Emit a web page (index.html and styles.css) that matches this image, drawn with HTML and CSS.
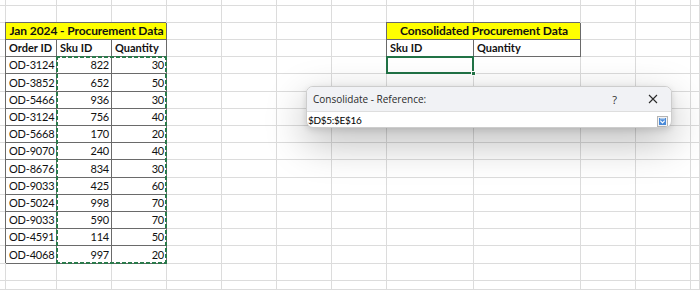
FILE: index.html
```html
<!DOCTYPE html>
<html lang="en">
<head>
    <meta charset="UTF-8">
    <meta name="viewport" content="width=device-width, initial-scale=1.0">
    <title>Consolidate - Reference</title>
    <link rel="stylesheet" href="styles.css">
</head>
<body>
    <!-- Grade da planilha (gerada pelo script) -->
    <div class="sheet" id="sheet"></div>

    <!-- Janela Consolidate -->
    <div class="dialog">
        <div class="dialog-title">
            <span class="dialog-caption">Consolidate - Reference:</span>
            <span class="dialog-help">?</span>
            <svg class="dialog-close" width="10" height="10" viewBox="0 0 10 10">
                <path d="M1 1L9 9M9 1L1 9" stroke="#2b2b2b" stroke-width="1.1" fill="none"/>
            </svg>
        </div>
        <div class="dialog-body">
            <span class="dialog-ref">$D$5:$E$16</span>
            <svg class="collapse-btn" width="11" height="11" viewBox="0 0 11 11">
                <rect x="0.5" y="0.5" width="10" height="10" fill="#f4f4f4" stroke="#b4b4b4"/>
                <rect x="2" y="2" width="7" height="7" fill="#4a8ad8"/>
                <path d="M3.3 4.6L5.5 6.8L7.7 4.6" stroke="#fff" stroke-width="1.2" fill="none"/>
                <path d="M3 2.8H8" stroke="#fff" stroke-width="0.8"/>
            </svg>
        </div>
    </div>

    <script>
        document.addEventListener('DOMContentLoaded', () => {
            const sheet = document.getElementById('sheet');
            const totalRows = 18;
            const totalCols = 13;
            const cells = {};
            const covered = {};

            function put(r, c, text, cls, span) {
                cells[r + ',' + c] = { text: text, cls: cls, span: span || 1 };
                for (let i = 1; i < (span || 1); i++) {
                    covered[r + ',' + (c + i)] = true;
                }
            }

            const dados = [
                ['OD-3124', 822, 30],
                ['OD-3852', 652, 50],
                ['OD-5466', 936, 30],
                ['OD-3124', 756, 40],
                ['OD-5668', 170, 20],
                ['OD-9070', 240, 40],
                ['OD-8676', 834, 30],
                ['OD-9033', 425, 60],
                ['OD-5024', 998, 70],
                ['OD-9033', 590, 70],
                ['OD-4591', 114, 50],
                ['OD-4068', 997, 20]
            ];

            // Tabela de origem
            put(2, 1, 'Jan 2024 - Procurement Data', 'tb title', 3);
            put(3, 1, 'Order ID', 'tb head');
            put(3, 2, 'Sku ID', 'tb head');
            put(3, 3, 'Quantity', 'tb head');
            dados.forEach((linha, i) => {
                put(4 + i, 1, linha[0], 'tb');
                put(4 + i, 2, linha[1], 'tb num');
                put(4 + i, 3, linha[2], 'tb num');
            });

            // Tabela consolidada
            put(2, 8, 'Consolidated Procurement Data', 'tb title', 2);
            put(3, 8, 'Sku ID', 'tb head');
            put(3, 9, 'Quantity', 'tb head');

            for (let r = 0; r < totalRows; r++) {
                for (let c = 0; c < totalCols; c++) {
                    const key = r + ',' + c;
                    if (covered[key]) continue;
                    const info = cells[key];
                    const cell = document.createElement('div');
                    cell.className = 'cell' + (info ? ' ' + info.cls : '');
                    cell.style.gridRow = r + 1;
                    cell.style.gridColumn = (c + 1) + ' / span ' + (info ? info.span : 1);
                    if (info) cell.textContent = info.text;
                    sheet.appendChild(cell);
                }
            }

            // Borda tracejada da cópia (B4:C15)
            const marquee = document.createElement('div');
            marquee.className = 'marquee';
            marquee.style.gridRow = '5 / 17';
            marquee.style.gridColumn = '3 / 5';
            sheet.appendChild(marquee);

            // Célula selecionada (H4)
            const selected = document.createElement('div');
            selected.className = 'selected';
            selected.style.gridRow = '5';
            selected.style.gridColumn = '9';
            selected.innerHTML = '<span class="fill-handle"></span>';
            sheet.appendChild(selected);
        });
    </script>
</body>
</html>
```

FILE: styles.css
```css
* {
    margin: 0;
    padding: 0;
    box-sizing: border-box;
}

body {
    position: relative;
    width: 700px;
    height: 290px;
    overflow: hidden;
    background-color: #fff;
    font-family: Lato, "Liberation Sans", sans-serif;
    color: #111;
}

.sheet {
    display: grid;
    grid-template-columns: 6px 51px 55px 55px 55px 55px 55px 55px 87px 107px 55px 55px 1fr;
    grid-template-rows: 6px repeat(3, 17px 17px 17px 17px 18px) 17px 1fr;
    width: 700px;
    height: 290px;
}

.cell {
    display: flex;
    align-items: flex-end;
    padding: 0 2px 2px 3px;
    font-size: 11px;
    letter-spacing: -0.2px;
    line-height: 13px;
    white-space: nowrap;
    border-right: 1px solid #dcdcdc;
    border-bottom: 1px solid #dcdcdc;
}

/* Células com borda da tabela */
.tb {
    border-color: #6a6a6a;
    box-shadow: -1px -1px 0 #6a6a6a;
}

.title {
    justify-content: center;
    background-color: #ffff00;
    font-size: 12px;
    letter-spacing: -0.1px;
    font-weight: bold;
}

.head {
    font-weight: bold;
    letter-spacing: 0;
}

.num {
    justify-content: flex-end;
}

.marquee {
    margin: -1px 0 0 -1px;
    z-index: 1;
    background:
        repeating-linear-gradient(90deg, #2a7a4b 0 4px, transparent 4px 6px) top left / 100% 2px no-repeat,
        repeating-linear-gradient(90deg, #2a7a4b 0 4px, transparent 4px 6px) bottom left / 100% 2px no-repeat,
        repeating-linear-gradient(180deg, #2a7a4b 0 4px, transparent 4px 6px) top left / 2px 100% no-repeat,
        repeating-linear-gradient(180deg, #2a7a4b 0 4px, transparent 4px 6px) top right / 2px 100% no-repeat;
}

.selected {
    position: relative;
    margin: -1px 0 0 -1px;
    z-index: 1;
    border: 2px solid #217346;
}

.fill-handle {
    position: absolute;
    right: -4px;
    bottom: -4px;
    width: 5px;
    height: 5px;
    background-color: #217346;
    border: 1px solid #fff;
}

/* Janela Consolidate */
.dialog {
    position: absolute;
    left: 306px;
    top: 86px;
    width: 366px;
    border: 1px solid #cdcdcd;
    border-radius: 7px;
    overflow: hidden;
    background-color: #fff;
    box-shadow: 0 14px 40px rgba(0, 0, 0, 0.28), 0 2px 6px rgba(0, 0, 0, 0.12);
    z-index: 5;
}

.dialog-title {
    display: flex;
    align-items: center;
    height: 25px;
    padding: 0 13px 0 6px;
    background-color: #f1f2f5;
    border-bottom: 1px solid #dedede;
    font-family: "Open Sans", "Noto Sans", sans-serif;
    font-size: 10px;
    color: #2b2b2b;
}

.dialog-caption {
    flex: 1;
}

.dialog-help {
    margin-right: 31px;
    font-size: 11px;
}

.dialog-body {
    display: flex;
    align-items: center;
    justify-content: space-between;
    height: 15px;
    padding: 0 3px 0 1px;
}

.dialog-ref {
    font-size: 10px;
    letter-spacing: -0.3px;
    color: #000;
}

.collapse-btn {
    display: block;
    margin-top: 3px;
}
```
